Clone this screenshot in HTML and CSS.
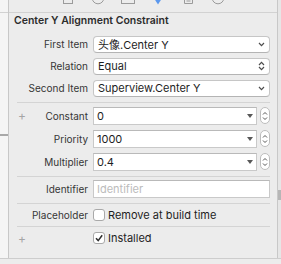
FILE: index.html
```html
<!DOCTYPE html>
<html lang="en">
<head>
    <meta charset="UTF-8">
    <title>Center Y Alignment Constraint</title>
    <link rel="stylesheet" href="styles.css">
</head>
<body>
<div class="window">
    <div class="main">
        <!-- outline strip on the left -->
        <div class="outline">
            <div class="outline-top"></div>
            <div class="outline-split"></div>
        </div>

        <div class="inspector">
            <div class="tabs">
                <svg class="tab" viewBox="0 0 14 14"><rect x="2.5" y="0.5" width="9" height="12" fill="none" stroke="#9b9b9b"/></svg>
                <svg class="tab" viewBox="0 0 14 14"><circle cx="7" cy="7" r="5.8" fill="none" stroke="#9b9b9b"/></svg>
                <svg class="tab" viewBox="0 0 14 14"><rect x="0.5" y="2.5" width="13" height="10" fill="none" stroke="#9b9b9b"/></svg>
                <svg class="tab" viewBox="0 0 14 14"><path d="M3.5 1 H10.5 V8 L7 13.5 L3.5 8 Z" fill="#5b98ee"/></svg>
                <svg class="tab" viewBox="0 0 14 14"><path d="M3.5 0.5 H9 L11.5 3 V12.5 H3.5 Z" fill="none" stroke="#9b9b9b"/><path d="M5.5 8 H9.5 M5.5 10 H9.5" stroke="#9b9b9b"/></svg>
                <svg class="tab" viewBox="0 0 14 14"><circle cx="7" cy="7" r="5.8" fill="none" stroke="#9b9b9b"/></svg>
            </div>

            <h2 class="section-title">Center Y Alignment Constraint</h2>

            <div class="group group-items">
                <div class="row">
                    <div class="label-cell"><span class="label">First Item</span></div>
                    <div class="popup">
                        <span>头像.Center Y</span>
                        <svg class="chev" viewBox="0 0 7 5"><polyline points="1,1 3.5,3.6 6,1" fill="none" stroke="#4d4d4d" stroke-width="1.2"/></svg>
                    </div>
                </div>
                <div class="row">
                    <div class="label-cell"><span class="label">Relation</span></div>
                    <div class="popup">
                        <span>Equal</span>
                        <svg class="updown" viewBox="0 0 7 10"><polyline points="1,4 3.5,1.4 6,4" fill="none" stroke="#4d4d4d" stroke-width="1.2"/><polyline points="1,6 3.5,8.6 6,6" fill="none" stroke="#4d4d4d" stroke-width="1.2"/></svg>
                    </div>
                </div>
                <div class="row">
                    <div class="label-cell"><span class="label">Second Item</span></div>
                    <div class="popup">
                        <span>Superview.Center Y</span>
                        <svg class="chev" viewBox="0 0 7 5"><polyline points="1,1 3.5,3.6 6,1" fill="none" stroke="#4d4d4d" stroke-width="1.2"/></svg>
                    </div>
                </div>
            </div>

            <div class="group group-values">
                <div class="row row-tall">
                    <div class="label-cell"><span class="plus">+</span><span class="label">Constant</span></div>
                    <div class="combo-wrap">
                        <div class="combo"><span>0</span><svg class="tri" viewBox="0 0 6 4"><polygon points="0,0 6,0 3,4" fill="#585858"/></svg></div>
                        <div class="stepper"><svg viewBox="0 0 6 12"><polyline points="1,4.5 3,2.5 5,4.5" fill="none" stroke="#555" stroke-width="1"/><polyline points="1,7.5 3,9.5 5,7.5" fill="none" stroke="#555" stroke-width="1"/></svg></div>
                    </div>
                </div>
                <div class="row row-tall">
                    <div class="label-cell"><span class="label">Priority</span></div>
                    <div class="combo-wrap">
                        <div class="combo"><span>1000</span><svg class="tri" viewBox="0 0 6 4"><polygon points="0,0 6,0 3,4" fill="#585858"/></svg></div>
                        <div class="stepper"><svg viewBox="0 0 6 12"><polyline points="1,4.5 3,2.5 5,4.5" fill="none" stroke="#555" stroke-width="1"/><polyline points="1,7.5 3,9.5 5,7.5" fill="none" stroke="#555" stroke-width="1"/></svg></div>
                    </div>
                </div>
                <div class="row row-tall">
                    <div class="label-cell"><span class="label">Multiplier</span></div>
                    <div class="combo-wrap">
                        <div class="combo"><span>0.4</span><svg class="tri" viewBox="0 0 6 4"><polygon points="0,0 6,0 3,4" fill="#585858"/></svg></div>
                        <div class="stepper"><svg viewBox="0 0 6 12"><polyline points="1,4.5 3,2.5 5,4.5" fill="none" stroke="#555" stroke-width="1"/><polyline points="1,7.5 3,9.5 5,7.5" fill="none" stroke="#555" stroke-width="1"/></svg></div>
                    </div>
                </div>
            </div>

            <div class="group group-id">
                <div class="row">
                    <div class="label-cell"><span class="label">Identifier</span></div>
                    <div class="field">Identifier</div>
                </div>
            </div>

            <div class="group">
                <div class="row">
                    <div class="label-cell"><span class="label">Placeholder</span></div>
                    <label class="check-line"><span class="checkbox"></span>Remove at build time</label>
                </div>
            </div>

            <div class="group group-last">
                <div class="row">
                    <div class="label-cell"><span class="plus">+</span></div>
                    <label class="check-line">
                        <span class="checkbox"><svg viewBox="0 0 10 10"><polyline points="2,5.2 4.2,7.6 8.2,2.2" fill="none" stroke="#2e2e2e" stroke-width="1.5"/></svg></span>Installed
                    </label>
                </div>
            </div>
        </div>

        <div class="edge"><div class="edge-mark"></div></div>
    </div>
    <div class="footer"></div>
</div>
</body>
</html>
```

FILE: styles.css
```css
body {
    margin: 0;
    font-family: Inter, "Noto Sans CJK SC", sans-serif;
    font-size: 11px;
    color: #2a2a2a;
    background: #ececec;
}

.window {
    width: 281px;
    height: 264px;
    display: flex;
    flex-direction: column;
    overflow: hidden;
}

.main {
    height: 258px;
    display: flex;
}

.footer {
    flex: 1;
    border-top: 1px solid #cdcdcd;
    background: #ececec;
}

/* left outline strip */
.outline {
    width: 8px;
    background: #f5f5f5;
    border-right: 1px solid #c8c8c8;
}

.outline-top {
    height: 12px;
    border-bottom: 1px solid #d2d2d2;
}

.outline-split {
    margin-top: 121px;
    height: 2px;
    background: #a8a8a8;
}

.edge {
    width: 3px;
    background: #e6e6e6;
}

.edge-mark {
    margin-top: 190px;
    height: 10px;
    background: #b6b6b6;
}

/* inspector panel */
.inspector {
    flex: 1;
    background: #ececec;
    border-right: 1px solid #c8c8c8;
}

.tabs {
    height: 13px;
    box-sizing: border-box;
    border-bottom: 1px solid #d2d2d2;
    padding-bottom: 7px;
    display: flex;
    justify-content: center;
    align-items: flex-end;
    gap: 16px;
    overflow: hidden;
}

.tab {
    width: 14px;
    height: 14px;
    flex: none;
}

.section-title {
    margin: 0;
    padding: 1px 0 5px 5px;
    font-size: 10.5px;
    line-height: 14px;
    font-weight: 600;
    color: #2c2c2c;
}

.group {
    margin: 0 7px 0 8px;
    border-bottom: 1px solid #d4d4d4;
}

.group-items {
    padding-bottom: 3px;
}

.group-values {
    padding: 1px 0 3px;
}

.group-id {
    padding: 1px 0 3px;
}

.group-last {
    border-bottom: none;
}

.row {
    height: 22px;
    display: grid;
    grid-template-columns: 71px 177px;
    column-gap: 5px;
    align-items: center;
}

.row-tall {
    height: 23px;
}

.label-cell {
    display: flex;
    align-items: center;
}

.label {
    margin-left: auto;
    font-size: 10px;
    color: #363636;
}

.plus {
    color: #a5a5a5;
    font-size: 12px;
    padding-left: 1px;
}

/* popup buttons */
.popup {
    height: 17px;
    box-sizing: border-box;
    background: #fff;
    border: 1px solid #c6c6c6;
    border-bottom-color: #b4b4b4;
    border-radius: 4px;
    padding: 0 4px 0 4px;
    display: flex;
    align-items: center;
    justify-content: space-between;
    color: #1e1e1e;
}

.chev {
    width: 7px;
    height: 5px;
}

.updown {
    width: 7px;
    height: 10px;
}

/* combo boxes with steppers */
.combo-wrap {
    display: flex;
    align-items: center;
    gap: 3px;
}

.combo {
    width: 164px;
    height: 18px;
    box-sizing: border-box;
    background: #fff;
    border: 1px solid #c9c9c9;
    border-top-color: #b9b9b9;
    padding: 0 3px 0 3px;
    display: flex;
    align-items: center;
    justify-content: space-between;
    color: #1e1e1e;
}

.tri {
    width: 6px;
    height: 4px;
}

.stepper {
    width: 10px;
    height: 17px;
    box-sizing: border-box;
    background: #fff;
    border: 1px solid #bdbdbd;
    border-radius: 5px;
    display: flex;
    align-items: center;
    justify-content: center;
}

.stepper svg {
    width: 6px;
    height: 12px;
}

.field {
    height: 18px;
    box-sizing: border-box;
    background: #fff;
    border: 1px solid #c9c9c9;
    border-top-color: #b9b9b9;
    padding: 0 3px;
    display: flex;
    align-items: center;
    color: #bcbcbc;
}

/* checkboxes */
.check-line {
    display: flex;
    align-items: center;
    gap: 3px;
    color: #1e1e1e;
}

.checkbox {
    width: 12px;
    height: 12px;
    box-sizing: border-box;
    background: #fff;
    border: 1px solid #a9a9a9;
    border-radius: 3px;
    display: flex;
    align-items: center;
    justify-content: center;
}

.checkbox svg {
    width: 10px;
    height: 10px;
}
```
